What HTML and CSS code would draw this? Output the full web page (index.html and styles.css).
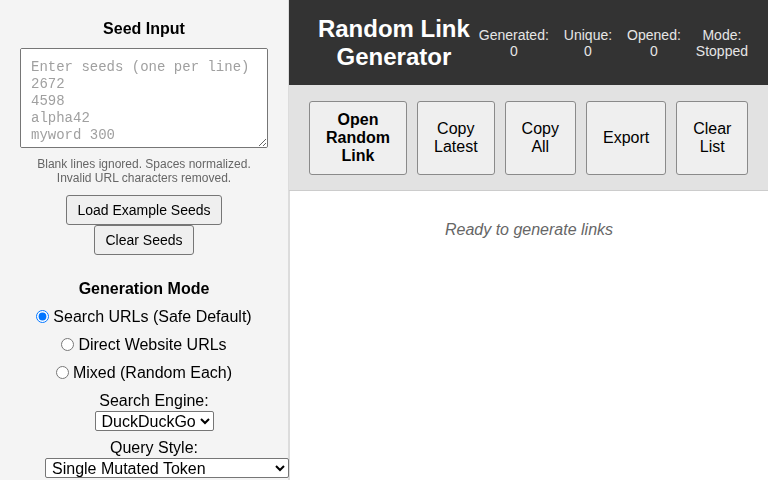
FILE: index.html
```html
<!DOCTYPE html>
<html lang="en">
<head>
<meta charset="utf-8">
<title>Random Link Generator</title>
<link rel="stylesheet" href="styles.css">
</head>
<body>
<aside class="sidebar">
  <h3 class="section-title">Seed Input</h3>
  <textarea class="seeds" placeholder="Enter seeds (one per line)&#10;2672&#10;4598&#10;alpha42&#10;myword 300"></textarea>
  <p class="hint">Blank lines ignored. Spaces normalized.<br>Invalid URL characters removed.</p>
  <div class="seed-actions">
    <button class="btn-small">Load Example Seeds</button>
    <button class="btn-small">Clear Seeds</button>
  </div>

  <h3 class="section-title mode-title">Generation Mode</h3>
  <label class="radio-row"><input type="radio" name="mode" checked>Search URLs (Safe Default)</label>
  <label class="radio-row"><input type="radio" name="mode">Direct Website URLs</label>
  <label class="radio-row"><input type="radio" name="mode">Mixed (Random Each)</label>

  <div class="options">
    <div class="field">
      <label class="field-label">Search Engine:</label>
      <select class="select">
        <option>DuckDuckGo</option>
        <option>Google</option>
        <option>Bing</option>
      </select>
    </div>
    <div class="field">
      <label class="field-label">Query Style:</label>
      <select class="select select-wide">
        <option>Single Mutated Token</option>
      </select>
    </div>
  </div>
</aside>

<main class="main">
  <header class="header">
    <h1 class="title">Random Link Generator</h1>
    <div class="stats">
      <div class="stat">Generated:<br>0</div>
      <div class="stat">Unique:<br>0</div>
      <div class="stat">Opened:<br>0</div>
      <div class="stat">Mode:<br>Stopped</div>
    </div>
  </header>
  <div class="toolbar">
    <button class="btn btn-primary">Open Random Link</button>
    <button class="btn">Copy Latest</button>
    <button class="btn">Copy All</button>
    <button class="btn">Export</button>
    <button class="btn">Clear List</button>
  </div>
  <section class="content">
    <p class="empty">Ready to generate links</p>
  </section>
</main>
</body>
</html>
```

FILE: styles.css
```css
* { box-sizing: border-box; }

html, body {
  margin: 0;
  height: 100%;
}

body {
  display: flex;
  font-family: "Liberation Sans", Arial, sans-serif;
  color: #000;
  overflow: hidden;
}

.sidebar {
  width: 289px;
  flex: 0 0 289px;
  padding: 20px;
  background: #f4f4f4;
  border-right: 1px solid #dcdcdc;
  text-align: center;
  height: 100%;
}

.section-title {
  margin: 0 0 10px;
  font-size: 16px;
  line-height: 18px;
  font-weight: bold;
}

.seeds {
  display: block;
  width: 248px;
  height: 100px;
  padding: 10px;
  border: 1px solid #767676;
  border-radius: 2px;
  font-family: "Liberation Mono", "Courier New", monospace;
  font-size: 14px;
  line-height: 17px;
  background: #fff;
  resize: vertical;
}

.seeds::placeholder {
  color: #a0a0a0;
}

.hint {
  margin: 9px 0 10px;
  font-size: 12px;
  line-height: 14px;
  color: #666;
}

.seed-actions {
  line-height: 0;
}

.btn-small {
  font-family: "Liberation Sans", Arial, sans-serif;
  font-size: 14px;
  line-height: 16px;
  padding: 6px 10px;
  background: #efefef;
  border: 1px solid #767676;
  border-radius: 3px;
  color: #000;
  margin: 0;
  vertical-align: top;
}

.mode-title {
  margin-top: 25px;
  margin-bottom: 10px;
}

.radio-row {
  display: block;
  font-size: 16px;
  line-height: 18px;
  margin-bottom: 10px;
}

.radio-row input {
  margin: 0 4px 0 0;
  vertical-align: -1px;
}

.options {
  padding-left: 25px;
  margin-right: 5px;
}

.field {
  margin-bottom: 8px;
}

.field-label {
  display: block;
  font-size: 16px;
  line-height: 18px;
}

.select {
  font-family: "Liberation Sans", Arial, sans-serif;
  font-size: 16px;
  height: 20px;
  padding: 0 0 0 2px;
  background: #fff;
  border: 1px solid #767676;
  border-radius: 2px;
  color: #000;
  margin-top: 1px;
}

.select-wide {
  width: 244px;
}

.main {
  flex: 1;
  display: flex;
  flex-direction: column;
  min-width: 0;
}

.header {
  height: 85px;
  background: #333;
  color: #fff;
  display: flex;
  align-items: center;
  padding: 0 20px;
}

.title {
  flex: 1;
  margin: 0;
  font-size: 24px;
  line-height: 28px;
  font-weight: bold;
  text-align: center;
}

.stats {
  display: flex;
  gap: 15px;
  flex-shrink: 0;
}

.stat {
  font-size: 14px;
  line-height: 16px;
  color: #e6e6e6;
  text-align: center;
}

.toolbar {
  display: flex;
  gap: 10px;
  padding: 16px 20px 15px;
  background: #e2e2e2;
  border-bottom: 1px solid #cccccc;
}

.btn {
  width: min-content;
  font-family: "Liberation Sans", Arial, sans-serif;
  font-size: 16px;
  line-height: 18px;
  padding: 9px 16px;
  background: #efefef;
  border: 1px solid #8a8a8a;
  border-radius: 3px;
  color: #000;
}

.btn-primary {
  font-weight: bold;
}

.content {
  flex: 1;
  background: #fff;
  border-left: 1px solid #dcdcdc;
  padding: 30px 20px 20px;
}

.empty {
  margin: 0;
  text-align: center;
  font-style: italic;
  font-size: 16px;
  line-height: 18px;
  color: #666;
}
```
